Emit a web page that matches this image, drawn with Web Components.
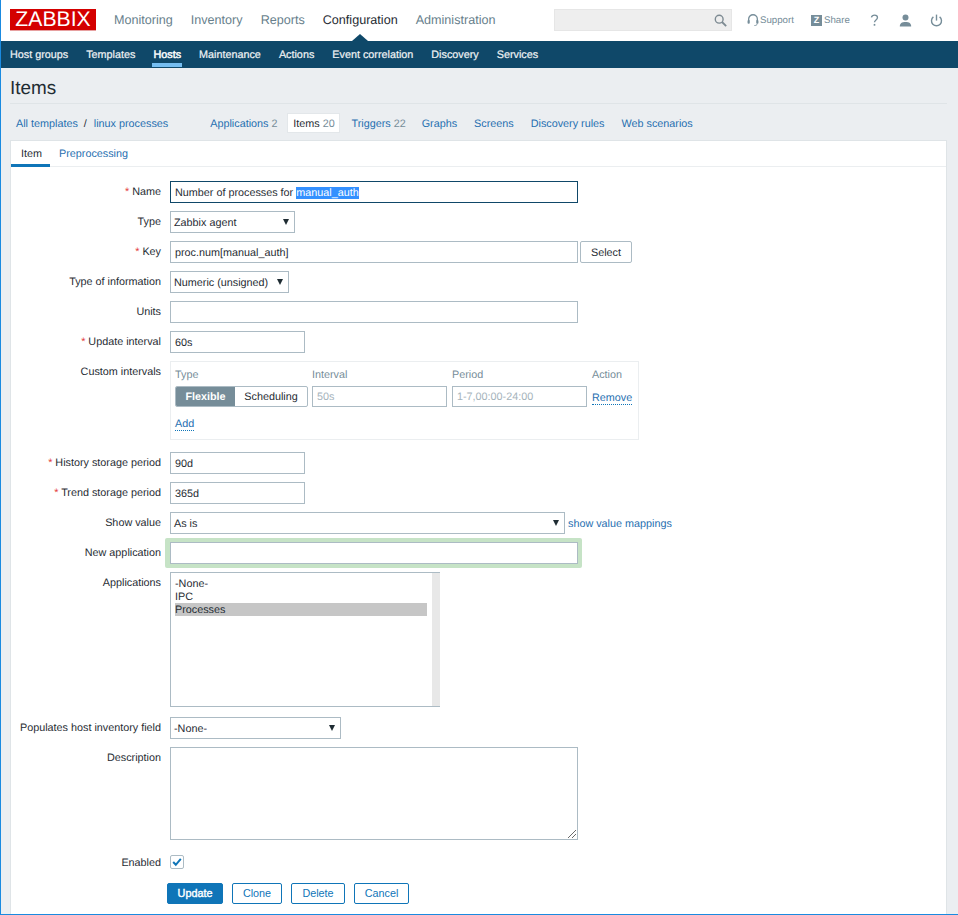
<!DOCTYPE html>
<html lang="en">
<head>
<meta charset="utf-8">
<title>Items</title>
<style>
html, body { margin: 0; padding: 0; height: 915px; overflow: hidden; background: #fff; }
body { font: 10.8px "Liberation Sans", Arial, sans-serif; color: #1f2c33; text-rendering: geometricPrecision; }
</style>
</head>
<body>
<zbx-page>
  <zbx-topnav active="Configuration"></zbx-topnav>
  <zbx-subnav active="Hosts"></zbx-subnav>
  <zbx-content>
    <zbx-title>Items</zbx-title>
    <zbx-crumbs></zbx-crumbs>
    <zbx-card>
      <zbx-tabs></zbx-tabs>
      <zbx-form>
        <zbx-row label="Name" required><zbx-text width="408" focused>Number of processes for <mark>manual_auth</mark></zbx-text></zbx-row>
        <zbx-row label="Type"><zbx-select width="125">Zabbix agent</zbx-select></zbx-row>
        <zbx-row label="Key" required><zbx-text width="408">proc.num[manual_auth]</zbx-text><zbx-button style="margin-left:2px">Select</zbx-button></zbx-row>
        <zbx-row label="Type of information"><zbx-select width="119">Numeric (unsigned)</zbx-select></zbx-row>
        <zbx-row label="Units"><zbx-text width="408"></zbx-text></zbx-row>
        <zbx-row label="Update interval" required><zbx-text width="135">60s</zbx-text></zbx-row>
        <zbx-row label="Custom intervals" style="margin-bottom:12px"><zbx-intervals></zbx-intervals></zbx-row>
        <zbx-row label="History storage period" required><zbx-text width="135">90d</zbx-text></zbx-row>
        <zbx-row label="Trend storage period" required><zbx-text width="135">365d</zbx-text></zbx-row>
        <zbx-row label="Show value"><zbx-select width="395">As is</zbx-select><zbx-link style="margin-left:3px">show value mappings</zbx-link></zbx-row>
        <zbx-row label="New application"><zbx-text width="408" highlight></zbx-text></zbx-row>
        <zbx-row label="Applications" style="margin-bottom:10px"><zbx-listbox></zbx-listbox></zbx-row>
        <zbx-row label="Populates host inventory field"><zbx-select width="171">-None-</zbx-select></zbx-row>
        <zbx-row label="Description" style="margin-bottom:11px"><zbx-textarea></zbx-textarea></zbx-row>
        <zbx-row label="Enabled" low style="margin-bottom:8px"><zbx-check></zbx-check></zbx-row>
        <zbx-actions></zbx-actions>
      </zbx-form>
    </zbx-card>
  </zbx-content>
</zbx-page>

<script>
// every element gets its markup and style from here
function shadow(el, css, html) {
    el.attachShadow({ mode: 'open' });
    el.shadowRoot.innerHTML = `<style>${css}</style>${html}`;
}

const LINK = '#1f6fb0';
const ICONS = {
    search: `<svg width="13" height="13" viewBox="0 0 13 13" fill="none" stroke="#7d8a92" stroke-width="1.4"><circle cx="5.2" cy="5.2" r="3.9"/><path d="M8 8l4.2 4.2" stroke-width="1.8"/></svg>`,
    support: `<svg width="12" height="14" viewBox="0 0 13 14" fill="none" stroke="#768d99" stroke-width="1.4"><path d="M1.8 8V6a4.7 4.7 0 0 1 9.4 0v2"/><rect x=".6" y="7" width="2.4" height="4" rx="1" fill="#768d99" stroke="none"/><rect x="10" y="7" width="2.4" height="4" rx="1" fill="#768d99" stroke="none"/><path d="M11 11c0 1.5-1.4 2-3 2" stroke-width="1"/></svg>`,
    help: `<svg width="9" height="13" viewBox="0 0 10 14" fill="none" stroke="#768d99" stroke-width="1.5"><path d="M1.6 3.6C2 1.8 3.4 1 5 1c1.9 0 3.3 1.1 3.3 2.8 0 2.6-3.3 2.6-3.3 5.2"/><path d="M5 10.8v2" stroke-width="1.8"/></svg>`,
    user: `<svg width="13" height="13" viewBox="0 0 13 13" fill="#768d99"><circle cx="6.5" cy="3.4" r="3"/><path d="M.8 12.5c0-3.2 2-4.6 5.7-4.6s5.7 1.4 5.7 4.6z"/></svg>`,
    power: `<svg width="13" height="13" viewBox="0 0 13 13" fill="none" stroke="#768d99" stroke-width="1.4"><path d="M6.5 .6v6"/><path d="M3.4 2.9a5 5 0 1 0 6.2 0"/></svg>`
};

class ZbxPage extends HTMLElement {
    constructor() {
        super();
        shadow(this, `
            :host { display: flex; flex-direction: column; box-sizing: border-box; height: 915px; width: 958px;
                    border-left: 1px solid #1a8ae0; border-bottom: 1px solid #1a8ae0; overflow: hidden; }
        `, `<slot></slot>`);
    }
}

class ZbxTopnav extends HTMLElement {
    constructor() {
        super();
        const items = ['Monitoring', 'Inventory', 'Reports', 'Configuration', 'Administration'];
        const active = this.getAttribute('active');
        shadow(this, `
            :host { display: flex; align-items: flex-start; box-sizing: border-box; height: 41px; padding-top: 9px; background: #fff; flex: none; }
            .logo { margin-left: 9px; width: 86px; height: 22px; background: #d40000; color: #fff; font-size: 21.2px; line-height: 21px;
                    text-align: center; flex: none; border-bottom: 1px solid #e7a0a0; box-sizing: border-box; }
            nav { display: flex; margin-left: 9px; }
            nav a { padding: 0 9px; font-size: 12.6px; color: #687f8c; line-height: 22px; position: relative; }
            nav a.on { color: #1f2c33; }
            nav a.on::after { content: ''; position: absolute; left: 50%; bottom: -10px; margin-left: -8px; border: 8px solid transparent;
                              border-top: 0; border-bottom: 7px solid #0f4869; }
            .search { margin-left: auto; width: 178px; height: 22px; box-sizing: border-box; background: #eee; border: 1px solid #e6e6e6;
                      display: flex; align-items: center; justify-content: flex-end; padding-right: 4px; }
            .tools { display: flex; align-items: center; height: 22px; color: #768d99; font-size: 9.7px; margin-left: 15px; width: 211px; flex: none; }
            .tools span { display: flex; align-items: center; gap: 1px; }
            .z { width: 11px; height: 11px; background: #768d99; color: #fff; font-weight: bold; font-size: 9px; line-height: 11px; text-align: center; display: block; margin-right: 1px; }
        `, `
            <div class="logo">ZABBIX</div>
            <nav>${items.map(i => `<a class="${i === active ? 'on' : ''}">${i}</a>`).join('')}</nav>
            <div class="search">${ICONS.search}</div>
            <div class="tools">
                <span>${ICONS.support}Support</span>
                <span style="margin-left:17px"><b class="z">Z</b>Share</span>
                <span style="margin-left:20px">${ICONS.help}</span>
                <span style="margin-left:20px">${ICONS.user}</span>
                <span style="margin-left:18px">${ICONS.power}</span>
            </div>
        `);
    }
}

class ZbxSubnav extends HTMLElement {
    constructor() {
        super();
        const items = ['Host groups', 'Templates', 'Hosts', 'Maintenance', 'Actions', 'Event correlation', 'Discovery', 'Services'];
        const active = this.getAttribute('active');
        shadow(this, `
            :host { display: flex; height: 27px; background: #0f4869; padding-left: 9px; gap: 18px; flex: none; }
            a { color: #f0f3f5; line-height: 28px; font-size: 10.8px; position: relative; -webkit-text-stroke: .2px #f0f3f5; }
            a.on { color: #fff; -webkit-text-stroke: .45px #fff; }
            a.on::after { content: ''; position: absolute; left: -1px; right: -1px; bottom: 1px; height: 4px; background: #75bdf0; }
        `, items.map(i => `<a class="${i === active ? 'on' : ''}">${i}</a>`).join(''));
    }
}

class ZbxContent extends HTMLElement {
    constructor() {
        super();
        shadow(this, `:host { display: flex; flex-direction: column; flex: 1; background: #ebeef1; padding: 0 11px 0 9px; min-height: 0; }`, `<slot></slot>`);
    }
}

class ZbxTitle extends HTMLElement {
    constructor() {
        super();
        shadow(this, `
            :host { display: block; height: 35px; border-bottom: 1px solid #dfe4e7; font-size: 18.9px; line-height: 41px; color: #1f2c33; flex: none; }
        `, `<slot></slot>`);
    }
}

class ZbxCrumbs extends HTMLElement {
    constructor() {
        super();
        const tabs = [['Applications', '2'], ['Items', '20', true], ['Triggers', '22'], ['Graphs'], ['Screens'], ['Discovery rules'], ['Web scenarios']];
        shadow(this, `
            :host { display: flex; align-items: center; box-sizing: border-box; height: 36px; padding: 2px 0 0 6px; flex: none; }
            a { color: ${LINK}; }
            .crumb { padding-top: 2px; }
            .sep { margin: 0 7px 0 6px; color: #1f2c33; padding-top: 2px; }
            .tabs { display: flex; margin-left: 36px; align-items: center; }
            .tab { padding: 0 6px; margin-right: 4px; height: 20px; line-height: 22px; display: block; box-sizing: border-box; white-space: nowrap; }
            .tab.on { background: #fff; color: #1f2c33; border: 1px solid #e3e7ea; line-height: 20px; padding: 0; width: 53px; margin-right: 5px; text-align: center; }
            .tab:nth-child(n+4) { margin-right: 5px; }
            small { font-size: 10.8px; color: #768d99; }
        `, `
            <a class="crumb">All templates</a><span class="sep">/</span><a class="crumb">linux processes</a>
            <div class="tabs">${tabs.map(t => `<a class="tab ${t[2] ? 'on' : ''}">${t[0]}${t[1] ? ` <small>${t[1]}</small>` : ''}</a>`).join('')}</div>
        `);
    }
}

class ZbxCard extends HTMLElement {
    constructor() {
        super();
        shadow(this, `
            :host { display: block; flex: 1; background: #fff; border: 1px solid #dfe4e7; border-bottom: 0; min-height: 0; }
        `, `<slot></slot>`);
    }
}

class ZbxTabs extends HTMLElement {
    constructor() {
        super();
        shadow(this, `
            :host { display: flex; height: 26px; border-bottom: 1px solid #ebeef0; box-sizing: border-box; }
            a { padding: 0 9px; line-height: 26px; height: 23px; color: ${LINK}; }
            a.on { color: #1f2c33; border-bottom: 3px solid #0f75b8; padding: 0 8px 0 10px; }
        `, `<a class="on">Item</a><a>Preprocessing</a>`);
    }
}

class ZbxForm extends HTMLElement {
    constructor() {
        super();
        shadow(this, `:host { display: block; padding-top: 14px; }`, `<slot></slot>`);
    }
}

class ZbxRow extends HTMLElement {
    constructor() {
        super();
        const star = this.hasAttribute('required') ? '<i>*</i> ' : '';
        shadow(this, `
            :host { display: grid; grid-template-columns: 150px 1fr; column-gap: 9px; margin-bottom: 8px; }
            label { text-align: right; line-height: 22px; color: #1f2c33; white-space: nowrap; }
            :host([low]) label { line-height: 24px; }
            i { color: #e33734; font-style: normal; }
            .f { display: flex; align-items: center; align-self: start; min-height: 22px; }
        `, `<label>${star}${this.getAttribute('label')}</label><div class="f"><slot></slot></div>`);
    }
}

class ZbxText extends HTMLElement {
    constructor() {
        super();
        const focused = this.hasAttribute('focused');
        const highlight = this.hasAttribute('highlight');
        shadow(this, `
            :host { display: block; flex: none; position: relative; }
            .box { position: relative; box-sizing: border-box; width: ${this.getAttribute('width')}px; height: 22px; border: 1px solid ${focused ? '#0f4869' : '#acbbc4'};
                   background: #fff; line-height: 22px; padding-left: 4px; color: #1f2c33; white-space: nowrap; overflow: hidden; }
            .glow { position: absolute; inset: -4px -4px -4px -5px; background: #c6e3c6; border-radius: 2px; }
            ::slotted(mark) { background: #3390ff; color: #fff; }
        `, `${highlight ? '<div class="glow"></div>' : ''}<div class="box"><slot></slot></div>`);
    }
}

class ZbxSelect extends HTMLElement {
    constructor() {
        super();
        shadow(this, `
            :host { display: flex; flex: none; box-sizing: border-box; width: ${this.getAttribute('width')}px; height: 22px; border: 1px solid #acbbc4;
                    background: #fff; align-items: center; padding: 0 5px 0 3px; color: #1f2c33; justify-content: space-between; white-space: nowrap; }
            span { padding-top: 2px; }
            b { border: 3.5px solid transparent; border-top: 6px solid #1f2c33; border-bottom: 0; display: block; flex: none; }
        `, `<span><slot></slot></span><b></b>`);
    }
}

class ZbxButton extends HTMLElement {
    constructor() {
        super();
        shadow(this, `
            :host { display: block; flex: none; box-sizing: border-box; height: 22px; width: 52px; border: 1px solid #acbbc4; border-radius: 2px;
                    line-height: 22px; color: #1f2c33; background: #fff; text-align: center; }
        `, `<slot></slot>`);
    }
}

class ZbxLink extends HTMLElement {
    constructor() {
        super();
        shadow(this, `:host { display: inline-block; color: ${LINK}; white-space: nowrap; padding-top: 2px; }`, `<slot></slot>`);
    }
}

class ZbxIntervals extends HTMLElement {
    constructor() {
        super();
        shadow(this, `
            :host { display: block; box-sizing: border-box; width: 469px; height: 79px; border: 1px solid #ebeef0; padding: 5px 4px; color: #768d99; }
            .g { display: grid; grid-template-columns: 133px 135px 135px auto; column-gap: 4px; }
            .g > span { line-height: 16px; height: 19px; }
            .seg { display: flex; height: 21px; box-sizing: border-box; border: 1px solid #acbbc4; border-radius: 2px; overflow: hidden; width: 133px; }
            .seg b { background: #768d99; color: #fff; width: 59px; text-align: center; line-height: 21px; }
            .seg span { flex: 1; color: #1f2c33; text-align: center; line-height: 21px; }
            .in { box-sizing: border-box; width: 135px; height: 21px; border: 1px solid #acbbc4; line-height: 21px; padding-left: 4px; color: #a5b3bb; overflow: hidden; }
            a { color: ${LINK}; border-bottom: 1px dotted #0f75b8; line-height: 12px; display: inline-block; }
            .rm { align-self: end; justify-self: start; margin: 0 0 2px 2px; }
            .add { margin-top: 11px; }
            .g > * { min-width: 0; }
            .i1 { margin-left: 1px; }
            .i2 { margin-left: 2px; }
        `, `
            <div class="g">
                <span>Type</span><span>Interval</span><span class="i1">Period</span><span class="i2">Action</span>
                <div class="seg"><b>Flexible</b><span>Scheduling</span></div>
                <div class="in">50s</div>
                <div class="in i1">1-7,00:00-24:00</div>
                <a class="rm">Remove</a>
            </div>
            <a class="add">Add</a>
        `);
    }
}

class ZbxListbox extends HTMLElement {
    constructor() {
        super();
        shadow(this, `
            :host { display: flex; box-sizing: border-box; width: 270px; height: 135px; border: 1px solid #acbbc4; border-right: 0; background: #fff; color: #1f2c33; }
            ul { flex: 1; margin: 0; padding: 4px 5px 4px 4px; list-style: none; }
            li { height: 13px; line-height: 15px; }
            li.sel { background: #c6c6c6; }
            .bar { width: 8px; background: #e8e8e8; flex: none; }
        `, `<ul><li>-None-</li><li>IPC</li><li class="sel">Processes</li></ul><div class="bar"></div>`);
    }
}

class ZbxTextarea extends HTMLElement {
    constructor() {
        super();
        shadow(this, `
            :host { display: block; box-sizing: border-box; width: 408px; height: 93px; border: 1px solid #acbbc4; background: #fff; position: relative; }
            svg { position: absolute; right: 0; bottom: 0; }
        `, `<svg width="11" height="11" viewBox="0 0 11 11" stroke="#6b6b6b" fill="none"><path d="M10 2L2 10M10 6L6 10"/></svg>`);
    }
}

class ZbxCheck extends HTMLElement {
    constructor() {
        super();
        shadow(this, `
            :host { display: block; box-sizing: border-box; width: 14px; height: 14px; border: 1px solid #acbbc4; border-radius: 2px; background: #fff; }
            svg { display: block; margin: 1px; }
        `, `<svg width="10" height="10" viewBox="0 0 10 10" fill="none" stroke="#0f75b8" stroke-width="2"><path d="M1.2 5l2.6 2.8L8.8 1.8"/></svg>`);
    }
}

class ZbxActions extends HTMLElement {
    constructor() {
        super();
        shadow(this, `
            :host { display: flex; gap: 9px; padding-left: 156px; }
            button { font: inherit; box-sizing: border-box; height: 21px; padding: 0 0 1px; border: 1px solid #0f75b8; border-radius: 2px; background: #fff; color: #0f75b8; }
            button.main { background: #0f75b8; color: #fff; -webkit-text-stroke: .4px #fff; }
        `, `
            <button class="main" style="width:56px">Update</button>
            <button style="width:50px">Clone</button>
            <button style="width:54px">Delete</button>
            <button style="width:55px">Cancel</button>
        `);
    }
}

customElements.define('zbx-page', ZbxPage);
customElements.define('zbx-topnav', ZbxTopnav);
customElements.define('zbx-subnav', ZbxSubnav);
customElements.define('zbx-content', ZbxContent);
customElements.define('zbx-title', ZbxTitle);
customElements.define('zbx-crumbs', ZbxCrumbs);
customElements.define('zbx-card', ZbxCard);
customElements.define('zbx-tabs', ZbxTabs);
customElements.define('zbx-form', ZbxForm);
customElements.define('zbx-row', ZbxRow);
customElements.define('zbx-text', ZbxText);
customElements.define('zbx-select', ZbxSelect);
customElements.define('zbx-button', ZbxButton);
customElements.define('zbx-link', ZbxLink);
customElements.define('zbx-intervals', ZbxIntervals);
customElements.define('zbx-listbox', ZbxListbox);
customElements.define('zbx-textarea', ZbxTextarea);
customElements.define('zbx-check', ZbxCheck);
customElements.define('zbx-actions', ZbxActions);
</script>
</body>
</html>
